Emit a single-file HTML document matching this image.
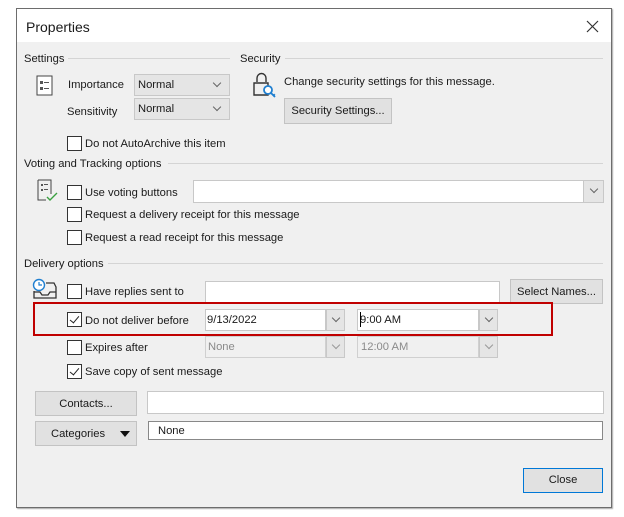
<!DOCTYPE html>
<html><head><style>
body{margin:0;width:624px;height:517px;background:#fff;position:relative;overflow:hidden;font-family:"Liberation Sans",sans-serif;font-size:11.2px;color:#1a1a1a}
.a{position:absolute}
.dlg{left:16px;top:8px;width:594px;height:498px;border:1px solid #6d6d6d;background:#f0f0f0;box-shadow:1px 1px 1px #aaa}
.tb{left:17px;top:9px;width:594px;height:33px;background:#fff}
.t{position:absolute;white-space:nowrap;line-height:14px}
.ln{position:absolute;height:1px;background:#d4d4d4}
.cb{position:absolute;width:13px;height:13px;border:1px solid #333;background:#fff}
.sel{position:absolute;background:#e5e5e5;border:1px solid #c8c8c8;box-sizing:border-box}
.inp{position:absolute;background:#fff;border:1px solid #c8c8c8;box-sizing:border-box}
.btn{position:absolute;background:#e1e1e1;border:1px solid #c3c3c3;box-sizing:border-box;text-align:center}
.dd{position:absolute;background:#e5e5e5;border:1px solid #c8c8c8;box-sizing:border-box}
.chev{position:absolute;width:5px;height:5px;border-right:1px solid #666;border-bottom:1px solid #666;transform:rotate(45deg)}
.ck:after{content:"";position:absolute;left:4px;top:1px;width:4px;height:8px;border-right:1.5px solid #222;border-bottom:1.5px solid #222;transform:rotate(40deg)}
</style></head><body>
<div class="a dlg"></div>
<div class="a tb"></div>
<div class="t" style="left:26px;top:20px;font-size:14px">Properties</div>
<svg class="a" style="left:586px;top:20px" width="13" height="13"><path d="M1 1L12 12M12 1L1 12" stroke="#333" stroke-width="1.2"/></svg>

<div class="t" style="left:24px;top:52px">Settings</div><div class="ln" style="left:68px;top:58px;width:162px"></div>
<div class="t" style="left:240px;top:52px">Security</div><div class="ln" style="left:285px;top:58px;width:318px"></div>
<svg class="a" style="left:36px;top:75px" width="18" height="22"><rect x="1" y="1" width="15" height="19" fill="#fff" stroke="#444"/><rect x="4" y="6" width="3" height="3" fill="#555"/><rect x="8" y="7" width="5" height="1" fill="#555"/><rect x="4" y="12" width="3" height="3" fill="#555"/><rect x="8" y="13" width="5" height="1" fill="#555"/></svg>
<div class="t" style="left:68px;top:78px">Importance</div>
<div class="sel" style="left:134px;top:74px;width:96px;height:22px"></div><div class="t" style="left:138px;top:78px">Normal</div><div class="chev" style="left:214px;top:80px"></div>
<div class="t" style="left:67px;top:105px">Sensitivity</div>
<div class="sel" style="left:134px;top:98px;width:96px;height:22px"></div><div class="t" style="left:138px;top:102px">Normal</div><div class="chev" style="left:214px;top:104px"></div>
<svg class="a" style="left:251px;top:72px" width="26" height="28"><path d="M6 10V6a4.5 4.5 0 0 1 9 0v4" fill="none" stroke="#333" stroke-width="1.4"/><path d="M3 11h14v12H3z" fill="none" stroke="#333" stroke-width="1.4"/><circle cx="17" cy="18" r="4" fill="#fff" stroke="#1f7fd0" stroke-width="1.8"/><path d="M19.5 20.5l4.5 4.5M22 24l1.8-1.8" stroke="#1f7fd0" stroke-width="1.8"/></svg>
<div class="t" style="left:284px;top:75px">Change security settings for this message.</div>
<div class="btn" style="left:284px;top:98px;width:108px;height:26px;line-height:24px">Security Settings...</div>
<div class="cb" style="left:67px;top:136px"></div><div class="t" style="left:85px;top:137px">Do not AutoArchive this item</div>

<div class="t" style="left:24px;top:157px">Voting and Tracking options</div><div class="ln" style="left:168px;top:163px;width:435px"></div>
<svg class="a" style="left:36px;top:179px" width="24" height="24"><path d="M2 1h13v14M2 1v20h8" fill="none" stroke="#444"/><rect x="5" y="5" width="2" height="2" fill="#555"/><rect x="8" y="5" width="4" height="1" fill="#555"/><rect x="5" y="10" width="2" height="2" fill="#555"/><rect x="8" y="10" width="4" height="1" fill="#555"/><path d="M11 18l3 3 7-7" fill="none" stroke="#3aa040" stroke-width="1.4"/></svg>
<div class="cb" style="left:67px;top:185px"></div><div class="t" style="left:85px;top:186px">Use voting buttons</div>
<div class="inp" style="left:193px;top:180px;width:411px;height:23px"></div><div class="dd" style="left:583px;top:180px;width:21px;height:23px"></div><div class="chev" style="left:591px;top:186px"></div>
<div class="cb" style="left:67px;top:207px"></div><div class="t" style="left:85px;top:208px">Request a delivery receipt for this message</div>
<div class="cb" style="left:67px;top:230px"></div><div class="t" style="left:85px;top:231px">Request a read receipt for this message</div>

<div class="t" style="left:24px;top:257px">Delivery options</div><div class="ln" style="left:108px;top:263px;width:495px"></div>
<svg class="a" style="left:32px;top:278px" width="26" height="22"><circle cx="7" cy="7" r="5.5" fill="#fff" stroke="#1f7fd0" stroke-width="1.4"/><path d="M7 4v3h3" fill="none" stroke="#1f7fd0" stroke-width="1.2"/><path d="M14 5h8l2 4v11H2v-7" fill="none" stroke="#333" stroke-width="1.3"/><path d="M2 14h6l2 3h6l2-3h6" fill="none" stroke="#333" stroke-width="1.3"/></svg>
<div class="cb" style="left:67px;top:284px"></div><div class="t" style="left:85px;top:285px">Have replies sent to</div>
<div class="inp" style="left:205px;top:281px;width:295px;height:22px"></div>
<div class="btn" style="left:510px;top:279px;width:93px;height:25px;line-height:24px">Select Names...</div>

<div class="a" style="left:33px;top:302px;width:516px;height:30px;border:2px solid #c00000"></div>
<div class="cb ck" style="left:67px;top:312px"></div><div class="t" style="left:85px;top:314px">Do not deliver before</div>
<div class="inp" style="left:205px;top:309px;width:121px;height:22px"></div><div class="t" style="left:207px;top:313px">9/13/2022</div>
<div class="dd" style="left:326px;top:309px;width:19px;height:22px"></div><div class="chev" style="left:333px;top:315px"></div>
<div class="inp" style="left:357px;top:309px;width:122px;height:22px"></div><div class="t" style="left:360px;top:313px">9:00 AM</div><div class="a" style="left:360px;top:312px;width:1px;height:15px;background:#000"></div>
<div class="dd" style="left:479px;top:309px;width:19px;height:22px"></div><div class="chev" style="left:486px;top:315px"></div>

<div class="cb" style="left:67px;top:340px"></div><div class="t" style="left:85px;top:341px">Expires after</div>
<div class="sel" style="left:205px;top:336px;width:121px;height:22px;background:#f0f0f0;border-color:#d0d0d0"></div><div class="t" style="left:208px;top:340px;color:#8a8a8a">None</div>
<div class="dd" style="left:326px;top:336px;width:19px;height:22px"></div><div class="chev" style="left:333px;top:342px;border-color:#999"></div>
<div class="sel" style="left:357px;top:336px;width:122px;height:22px;background:#f0f0f0;border-color:#d0d0d0"></div><div class="t" style="left:361px;top:340px;color:#8a8a8a">12:00 AM</div>
<div class="dd" style="left:479px;top:336px;width:19px;height:22px"></div><div class="chev" style="left:486px;top:342px;border-color:#999"></div>

<div class="cb ck" style="left:67px;top:364px"></div><div class="t" style="left:85px;top:365px">Save copy of sent message</div>

<div class="btn" style="left:35px;top:391px;width:102px;height:25px;line-height:24px">Contacts...</div>
<div class="inp" style="left:147px;top:391px;width:457px;height:23px"></div>
<div class="btn" style="left:35px;top:421px;width:102px;height:25px;line-height:24px;text-align:left;padding-left:15px">Categories</div>
<svg class="a" style="left:120px;top:431px" width="10" height="6"><path d="M0 0h10L5 6z" fill="#111"/></svg>
<div class="inp" style="left:148px;top:421px;width:455px;height:19px;border-color:#888"></div><div class="t" style="left:158px;top:424px">None</div>

<div class="btn" style="left:523px;top:468px;width:80px;height:25px;line-height:23px;border:1px solid #0078d7">Close</div>
</body></html>
